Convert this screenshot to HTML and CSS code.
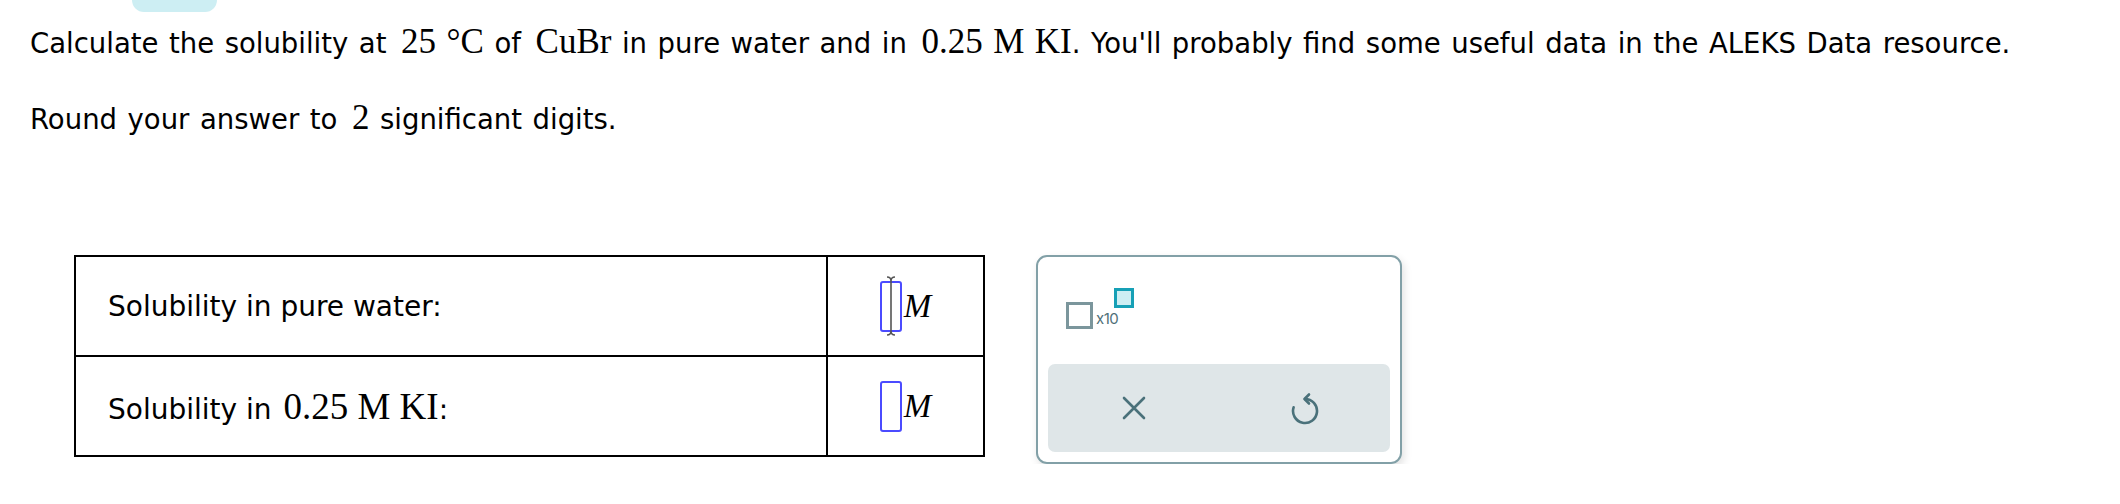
FILE: index.html
```html
<!DOCTYPE html>
<html lang="en">
<head>
    <meta charset="UTF-8">
    <title>Solubility of CuBr</title>
    <link rel="stylesheet" href="styles.css">
</head>
<body>
    <div class="tab"></div>

    <p class="question">Calculate the solubility at <span class="math">25 °C</span> of <span class="math">CuBr</span> in pure water and in <span class="math">0.25 M KI</span>. You'll probably find some useful data in the ALEKS Data resource.</p>
    <p class="question">Round your answer to <span class="math">2</span> significant digits.</p>

    <div class="answer-area">
        <table class="answers">
            <tr>
                <td class="label">Solubility in pure water:</td>
                <td class="value">
                    <span class="slot active">
                        <svg class="cursor" width="14" height="62" viewBox="0 0 14 62">
                            <path d="M3 2 Q7 2 7 6 Q7 2 11 2 M7 6 V56 M3 60 Q7 60 7 56 Q7 60 11 60" fill="none" stroke="#555" stroke-width="1.6"/>
                        </svg>
                    </span><span class="unit">M</span>
                </td>
            </tr>
            <tr>
                <td class="label">Solubility in <span class="math">0.25 M KI</span>:</td>
                <td class="value"><span class="slot"></span><span class="unit">M</span></td>
            </tr>
        </table>

        <div class="keypad">
            <div class="tools">
                <span class="sci">
                    <span class="sci-base"></span>
                    <span class="sci-x">x10</span>
                    <span class="sci-exp"></span>
                </span>
            </div>
            <div class="actions">
                <button class="action" title="Clear">
                    <svg width="26" height="26" viewBox="0 0 26 26">
                        <path d="M3 3 L23 23 M23 3 L3 23" stroke="#4a717a" stroke-width="2.6" stroke-linecap="round"/>
                    </svg>
                </button>
                <button class="action" title="Undo">
                    <svg width="30" height="34" viewBox="0 0 30 34">
                        <path d="M15 8 A12 12 0 1 1 3.6 16.3" fill="none" stroke="#4a717a" stroke-width="2.6" stroke-linecap="round"/>
                        <path d="M19 3.5 L14.5 8 L19 12.5" fill="none" stroke="#4a717a" stroke-width="2.6" stroke-linecap="round" stroke-linejoin="round"/>
                    </svg>
                </button>
            </div>
        </div>
    </div>
</body>
</html>
```

FILE: styles.css
```css
body {
    margin: 0;
    background: #fff;
    color: #000;
    font-family: 'DejaVu Sans', Verdana, sans-serif;
}

.tab {
    width: 85px;
    height: 12px;
    margin-left: 132px;
    background: #cdeef3;
    border-radius: 0 0 12px 12px;
}

.question {
    margin: 0 0 0 30px;
    font-size: 27.5px;
    line-height: 38px;
    word-spacing: 1.8px;
}

.question:first-of-type {
    margin-top: 11px;
    margin-bottom: 37px;
}

.math {
    font-family: 'Liberation Serif', 'Times New Roman', serif;
    font-size: 35px;
    margin-left: 4px;
}

.answer-area {
    display: flex;
    align-items: flex-start;
    gap: 51px;
    margin: 117px 0 0 74px;
}

.answers {
    border-collapse: collapse;
    width: 911px;
}

.answers td {
    border: 2px solid #000;
    height: 98px;
    padding: 0;
}

.label {
    width: 718px;
    padding-left: 32px !important;
    font-size: 28px;
}

.label .math {
    font-size: 37px;
    margin-left: 3px;
}

.value {
    text-align: center;
    white-space: nowrap;
}

.slot {
    display: inline-block;
    position: relative;
    width: 18px;
    height: 47px;
    border: 2px solid #4b4bff;
    border-radius: 3px;
    vertical-align: middle;
}

.cursor {
    position: absolute;
    left: 2px;
    top: -8px;
}

.unit {
    font-family: 'Liberation Serif', 'Times New Roman', serif;
    font-style: italic;
    font-size: 33px;
    vertical-align: middle;
    margin-left: 2px;
}

.keypad {
    width: 342px;
    height: 195px;
    border: 2px solid #82a0a7;
    border-radius: 11px;
    box-shadow: 2px 4px 8px rgba(0, 0, 0, 0.12);
    display: flex;
    flex-direction: column;
    padding: 0 10px 10px;
}

.tools {
    flex: 1;
    padding: 31px 0 0 18px;
}

.sci {
    position: relative;
    display: inline-block;
    width: 70px;
    height: 42px;
}

.sci-base {
    position: absolute;
    left: 0;
    top: 14px;
    width: 21px;
    height: 21px;
    border: 3px solid #7b969c;
}

.sci-x {
    position: absolute;
    left: 30px;
    top: 23px;
    font-family: Inter, 'Liberation Sans', sans-serif;
    font-size: 15px;
    line-height: 15px;
    letter-spacing: -0.5px;
    color: #4f6f78;
}

.sci-exp {
    position: absolute;
    left: 48px;
    top: 0;
    width: 14px;
    height: 14px;
    border: 3px solid #16a0b6;
    background: #cdeef3;
}

.actions {
    height: 88px;
    background: #dfe6e8;
    border-radius: 7px;
    display: flex;
    justify-content: space-around;
    align-items: center;
}

.action {
    background: none;
    border: none;
    padding: 0;
    width: 40px;
    height: 40px;
    display: flex;
    align-items: center;
    justify-content: center;
}
```
